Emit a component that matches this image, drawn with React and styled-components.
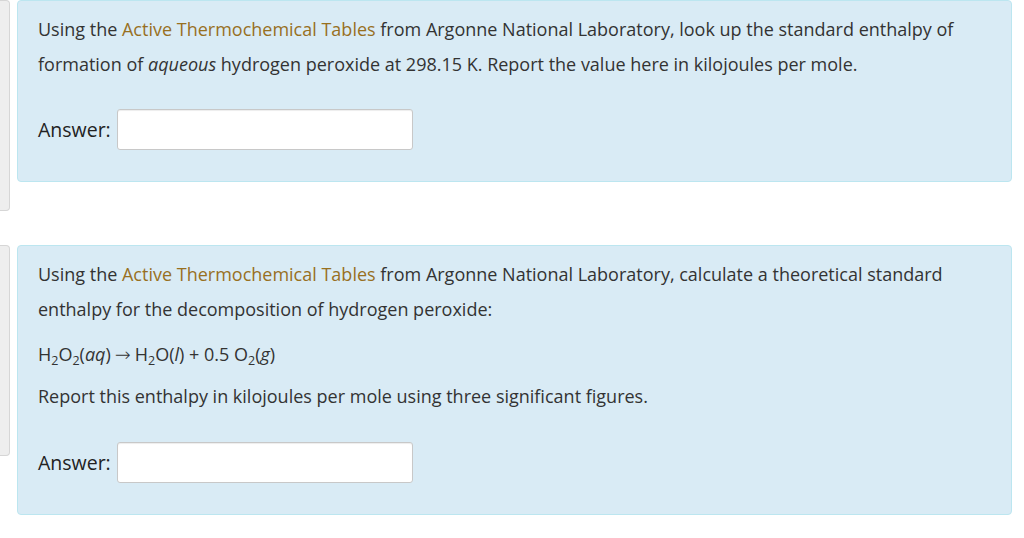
import styled, { createGlobalStyle } from "styled-components"

const Global = createGlobalStyle`
  html, body {
    margin: 0;
    padding: 0;
    background: #fff;
  }
  body {
    font-family: "Open Sans", "Liberation Sans", sans-serif;
    color: #333;
  }
`

const Page = styled.div`
  width: 1024px;
  height: 538px;
  overflow: hidden;
`

const Row = styled.div`
  display: flex;
  align-items: flex-start;
  gap: 7px;
  margin-top: ${(p) => p.$top || 0}px;
`

const Info = styled.div`
  flex: none;
  width: 10px;
  height: 211px;
  box-sizing: border-box;
  background: #eeeeee;
  border: 1px solid #d6d6d6;
  border-left: none;
  border-radius: 0 4px 4px 0;
`

const Card = styled.div`
  flex: none;
  width: 995px;
  box-sizing: border-box;
  background: #d9ebf5;
  border: 1px solid #bce6f0;
  border-radius: 4px;
  padding: 11px 19px 31px 20px;
  font-size: 18px;
`

const Text = styled.p`
  margin: 0 0 ${(p) => p.$after ?? 0}px;
  line-height: 35px;
  em {
    font-style: italic;
  }
  sub {
    font-size: 12.5px;
    line-height: 0;
    vertical-align: -4px;
  }
`

const Arrow = styled.span`
  display: inline-block;
  font-family: "DejaVu Sans", sans-serif;
  font-weight: 200;
  font-size: 19px;
  line-height: 1;
  margin: 0 4px;
`

const Link = styled.a`
  color: #98701f;
  text-decoration: none;
`

const AnswerRow = styled.div`
  display: flex;
  align-items: center;
  gap: 6px;
  margin-top: ${(p) => p.$top}px;
`

const Label = styled.span`
  color: #222;
  font-size: 19.5px;
`

const Input = styled.input`
  width: 296px;
  height: 41px;
  box-sizing: border-box;
  border: 1px solid #c8c8c8;
  border-radius: 3px;
  background: #fff;
  box-shadow: inset 0 1px 1px rgba(0, 0, 0, 0.075);
  padding: 0 8px;
  font: inherit;
`

export default function App() {
  return (
    <Page>
      <Global />
      <Row>
        <Info />
        <Card>
          <Text>
            Using the <Link href="#">Active Thermochemical Tables</Link> from Argonne National Laboratory, look up the
            standard enthalpy of formation of <em>aqueous</em> hydrogen peroxide at 298.15 K. Report the value here in
            kilojoules per mole.
          </Text>
          <AnswerRow $top={27}>
            <Label>Answer:</Label>
            <Input type="text" />
          </AnswerRow>
        </Card>
      </Row>
      <Row $top={34}>
        <Info />
        <Card>
          <Text $after={10}>
            Using the <Link href="#">Active Thermochemical Tables</Link> from Argonne National Laboratory, calculate a
            theoretical standard enthalpy for the decomposition of hydrogen peroxide:
          </Text>
          <Text $after={7}>
            H<sub>2</sub>O<sub>2</sub>(<em>aq</em>)<Arrow>→</Arrow>H<sub>2</sub>O(<em>l</em>) + 0.5 O<sub>2</sub>(
            <em>g</em>)
          </Text>
          <Text>Report this enthalpy in kilojoules per mole using three significant figures.</Text>
          <AnswerRow $top={28}>
            <Label>Answer:</Label>
            <Input type="text" />
          </AnswerRow>
        </Card>
      </Row>
    </Page>
  )
}
